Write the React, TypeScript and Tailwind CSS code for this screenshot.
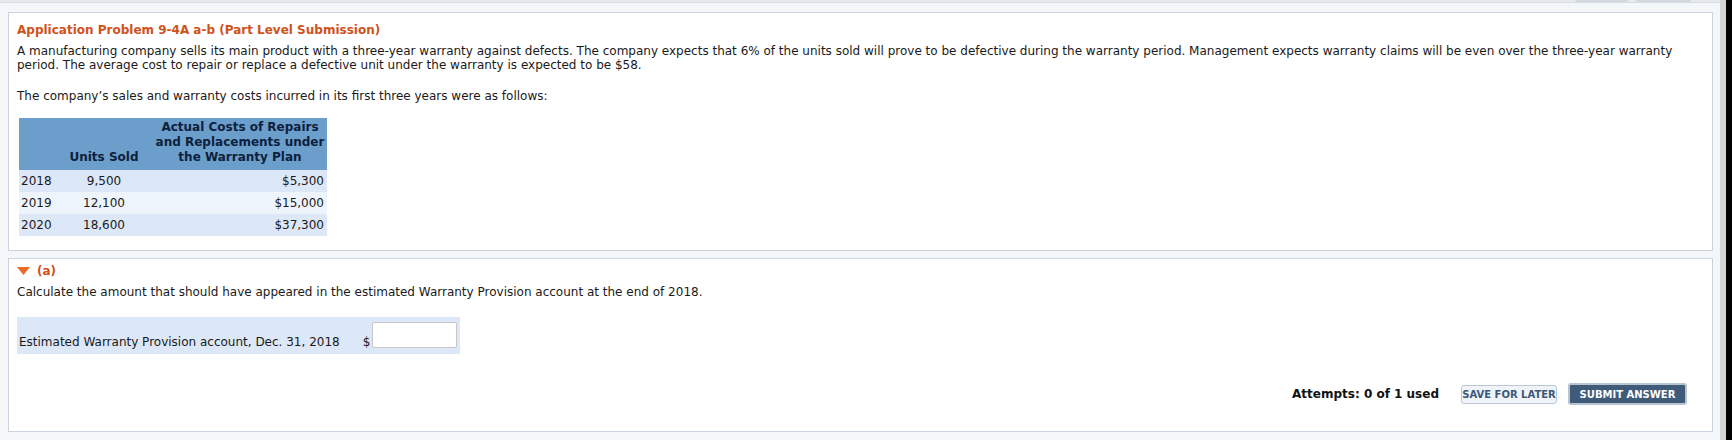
import React from "react";

const ROWS = [
  { year: "2018", units: "9,500", cost: "$5,300", bg: "bg-[#dce7f7]" },
  { year: "2019", units: "12,100", cost: "$15,000", bg: "bg-[#eef4fc]" },
  { year: "2020", units: "18,600", cost: "$37,300", bg: "bg-[#dce7f7]" },
];

function WarrantyTable() {
  return (
    <table className="ml-[2px] mt-[15px] w-[308px] border-collapse text-[12px]">
      <thead>
        <tr className="bg-[#6b9ecb] align-bottom font-bold leading-[15px] text-[#0d1f3c]">
          <th className="w-[36px] pb-[5px] pt-[2px]" />
          <th className="w-[98px] pb-[5px] pt-[2px] text-center">Units Sold</th>
          <th className="pb-[5px] pt-[2px] text-center">
            Actual Costs of Repairs
            <br />
            and Replacements under
            <br />
            the Warranty Plan
          </th>
        </tr>
      </thead>
      <tbody>
        {ROWS.map((r) => (
          <tr key={r.year} className={`h-[22px] ${r.bg}`}>
            <td className="pl-[2px]">{r.year}</td>
            <td className="text-center">{r.units}</td>
            <td className="pr-[3px] text-right">{r.cost}</td>
          </tr>
        ))}
      </tbody>
    </table>
  );
}

export default function App() {
  return (
    <div className="flex h-[440px] w-[1732px] overflow-hidden bg-[#f4f7fa] font-['DejaVu_Sans',Verdana,sans-serif] text-[12px] text-[#1a1a1a]">
      <div className="flex min-w-0 flex-1 flex-col">
        {/* top strip */}
        <div className="flex h-[3px] shrink-0 justify-end gap-[8px] border-b border-[#d8dde3] bg-[#e6e9ed] pr-[29px]">
          <div className="h-[2px] w-[53px] rounded-b-[2px] bg-[#d3d8de]" />
          <div className="h-[2px] w-[55px] rounded-b-[2px] bg-[#d3d8de]" />
        </div>

        <div className="flex flex-col gap-[7px] pl-[8px] pr-[7px] pt-[9px]">
          {/* problem card */}
          <section className="h-[239px] border border-[#cad3de] bg-white px-[8px] pt-[9px]">
            <h1 className="text-[12px] font-bold leading-[16px] text-[#d0521b]">
              Application Problem 9-4A a-b (Part Level Submission)
            </h1>
            <p className="mt-[6px] leading-[14px]">
              A manufacturing company sells its main product with a three-year warranty against defects. The company
              expects that 6% of the units sold will prove to be defective during the warranty period. Management expects
              warranty claims will be even over the three-year warranty period. The average cost to repair or replace a
              defective unit under the warranty is expected to be $58.
            </p>
            <p className="mt-[17px] leading-[14px]">
              The company’s sales and warranty costs incurred in its first three years were as follows:
            </p>
            <WarrantyTable />
          </section>

          {/* part (a) card */}
          <section className="flex h-[174px] flex-col border border-[#cad3de] bg-white px-[8px] pt-[4px]">
            <div className="flex items-center gap-[7px] leading-[16px]">
              <svg width="13" height="8" viewBox="0 0 13 8" className="shrink-0">
                <polygon points="0,0 13,0 6.5,8" fill="#ea6a27" />
              </svg>
              <span className="text-[12px] font-bold text-[#d0521b]">(a)</span>
            </div>
            <p className="mt-[6px] leading-[14px]">
              Calculate the amount that should have appeared in the estimated Warranty Provision account at the end of 2018.
            </p>
            <div className="mt-[18px] flex h-[37px] w-[443px] items-end bg-[#dce7f7] pb-[5px] pl-[2px]">
              <span className="leading-[14px]">Estimated Warranty Provision account, Dec. 31, 2018</span>
              <span className="ml-[23px] leading-[14px]">$</span>
              <input
                type="text"
                className="mb-[1px] ml-[2px] h-[26px] w-[85px] rounded-[2px] border border-[#c6c6c6] bg-white px-[3px] outline-none"
              />
            </div>
            <div className="mt-[29px] flex items-center justify-end pr-[17px]">
              <span className="text-[12px] font-bold text-[#111]">Attempts: 0 of 1 used</span>
              <button className="ml-[22px] h-[19px] w-[96px] rounded-[3px] border border-[#b9c7d7] bg-[#f0f4f9] text-[10px] font-bold text-[#3b5877]">
                SAVE FOR LATER
              </button>
              <button className="ml-[11px] h-[22px] w-[119px] rounded-[3px] border-2 border-[#b8c4d0] bg-[#3f5b79] text-[10px] font-bold text-white">
                SUBMIT ANSWER
              </button>
            </div>
          </section>
        </div>
      </div>

      {/* scrollbar edge */}
      <div className="flex w-[12px] shrink-0">
        <div className="w-[6px] bg-[#d4d4d4]" />
        <div className="flex-1 bg-black" />
      </div>
    </div>
  );
}
